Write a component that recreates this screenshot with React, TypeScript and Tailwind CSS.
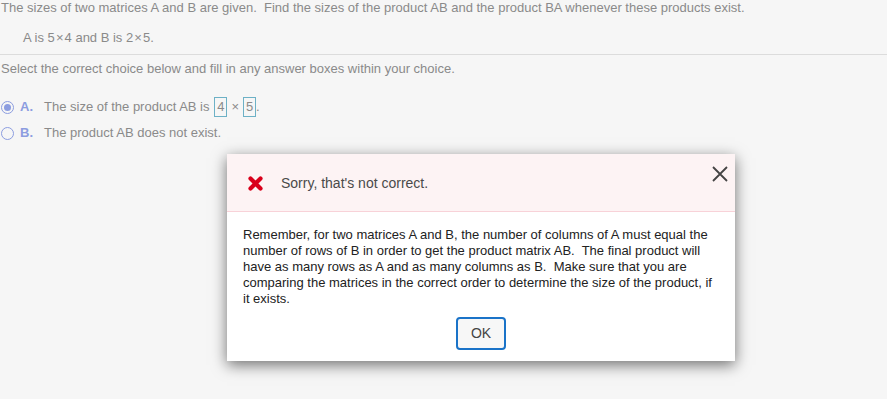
export default function App() {
    return (
        <div className="relative h-[399px] w-full overflow-hidden bg-[#f6f6f6] font-['Liberation_Sans',Arial,sans-serif] text-[13px] text-[#8a8a8a]">
            {/* question */}
            <p className="h-4 leading-4 pl-px">
                The sizes of two matrices A and B are given.&nbsp; Find the sizes of the product AB and the product BA whenever these products exist.
            </p>
            <p className="mt-[14px] h-4 leading-4 pl-[23px]">A is 5&#8202;×&#8202;4 and B is 2&#8202;×&#8202;5.</p>
            <div className="mt-2 border-t border-[#dcdcdc]" />
            <p className="mt-[6px] h-4 leading-4 pl-px">Select the correct choice below and fill in any answer boxes within your choice.</p>

            {/* choices */}
            <div className="mt-5 flex h-5 items-center">
                <span className="ml-px flex h-[13px] w-[13px] items-center justify-center rounded-full border border-[#8c9de0]">
                    <span className="h-[7px] w-[7px] rounded-full bg-[#8c9de0]" />
                </span>
                <span className="ml-[6px] w-6 font-bold text-[#8c9de0]">A.</span>
                <span>The size of the product AB is</span>
                <span className="ml-[5px] flex h-5 w-[13px] items-center justify-center border border-[#6db1c6]">4</span>
                <span className="mx-1">×</span>
                <span className="flex h-5 w-[13px] items-center justify-center border border-[#6db1c6]">5</span>
                <span>.</span>
            </div>
            <div className="mt-2 flex h-4 items-center">
                <span className="ml-px h-[13px] w-[13px] rounded-full border border-[#8c9de0]" />
                <span className="ml-[6px] w-6 font-bold text-[#8c9de0]">B.</span>
                <span>The product AB does not exist.</span>
            </div>

            {/* feedback dialog */}
            <div className="absolute left-[227px] top-[154px] w-[508px] bg-white shadow-[0_4px_14px_rgba(0,0,0,0.55)]">
                <div className="relative flex h-[58px] items-center border-b border-[#f8d2d8] bg-[#fdf3f4] pl-[21px]">
                    <svg width="15" height="15" viewBox="0 0 15 15" className="mt-px">
                        <path d="M2.5 2.5 L12.5 12.5 M12.5 2.5 L2.5 12.5" stroke="#d9001b" strokeWidth="4.2" strokeLinecap="round" />
                    </svg>
                    <span className="ml-[18px] mt-px text-[14px] text-[#4a4a4a]">Sorry, that's not correct.</span>
                    <svg width="16" height="16" viewBox="0 0 16 16" className="absolute right-[7px] top-[12px]">
                        <path d="M1 1 L15 15 M15 1 L1 15" stroke="#444" strokeWidth="1.8" />
                    </svg>
                </div>
                <div className="px-4 pt-[15px] pb-[11px]">
                    <p className="leading-4 text-[#222]">
                        Remember, for two matrices A and B, the number of columns of A must equal the number of rows of B in order to get the product matrix AB.&nbsp; The final product will have as many rows as A and as many columns as B.&nbsp; Make sure that you are comparing the matrices in the correct order to determine the size of the product, if it exists.
                    </p>
                    <div className="mt-[10px] flex justify-center">
                        <button className="h-[33px] w-[50px] rounded-[4px] border-2 border-[#1a73c8] bg-[#f7f7f7] text-[14px] text-[#444]">
                            OK
                        </button>
                    </div>
                </div>
            </div>
        </div>
    );
}
